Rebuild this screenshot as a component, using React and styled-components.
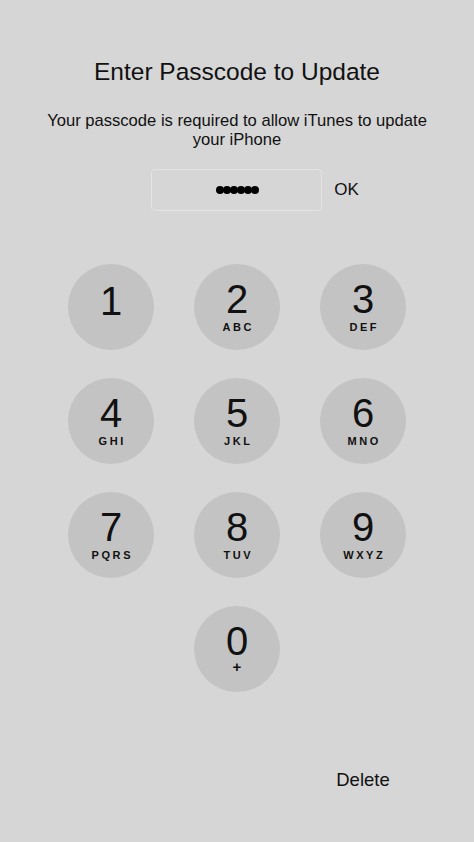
import React from 'react';
import styled, { createGlobalStyle } from 'styled-components';

const GlobalStyle = createGlobalStyle`
    html, body {
        margin: 0;
        padding: 0;
        background: #d6d6d6;
    }
    body {
        font-family: "Liberation Sans", Arial, sans-serif;
        color: #111;
    }
`;

const Screen = styled.div`
    width: 474px;
    height: 842px;
    background: #d6d6d6;
    display: flex;
    flex-direction: column;
    align-items: center;
    box-sizing: border-box;
    padding-top: 58px;
`;

const Title = styled.h1`
    margin: 0;
    font-size: 24.5px;
    line-height: 28px;
    font-weight: 400;
    color: #111;
`;

const Message = styled.p`
    margin: 25px 0 0;
    width: 392px;
    text-align: center;
    font-size: 16.6px;
    line-height: 19px;
    color: #111;
`;

const EntryRow = styled.div`
    display: flex;
    align-items: center;
    margin-top: 20px;
    margin-left: 36px;
    gap: 12px;
`;

const Field = styled.div`
    width: 169px;
    height: 40px;
    border: 1px solid #e4e4e4;
    border-radius: 4px;
    display: flex;
    align-items: center;
    justify-content: center;
`;

const Dots = styled.div`
    display: flex;
    margin-left: 2px;
`;

const Dot = styled.span`
    width: 8px;
    height: 8px;
    border-radius: 50%;
    background: #000;
    margin-left: -1px;
`;

const OkButton = styled.span`
    font-size: 17px;
    color: #111;
`;

const Keypad = styled.div`
    display: grid;
    grid-template-columns: repeat(3, 86px);
    column-gap: 40px;
    row-gap: 28px;
    margin-top: 53px;
`;

const Key = styled.div`
    width: 86px;
    height: 86px;
    border-radius: 50%;
    background: #c3c3c3;
    display: flex;
    flex-direction: column;
    align-items: center;
    justify-content: center;
    grid-column: ${p => p.$col || 'auto'};
`;

const Digit = styled.span`
    font-size: 40px;
    line-height: 36px;
    font-weight: 300;
    color: #111;
    margin-top: ${p => (p.$alone ? '-13px' : '-1px')};
`;

const Letters = styled.span`
    font-size: 11px;
    line-height: 12px;
    font-weight: 700;
    letter-spacing: 2.6px;
    margin-right: -2.6px;
    color: #111;
    margin-top: 4px;
`;

const Plus = styled.span`
    font-size: 15px;
    line-height: 15px;
    font-weight: 700;
    color: #111;
    margin-top: 0px;
`;

const Footer = styled.div`
    width: 338px;
    display: grid;
    grid-template-columns: repeat(3, 86px);
    column-gap: 40px;
    margin-top: 77px;
`;

const DeleteButton = styled.span`
    grid-column: 3;
    text-align: center;
    font-size: 18.5px;
    color: #111;
`;

const keys = [
    ['1', ''],
    ['2', 'ABC'],
    ['3', 'DEF'],
    ['4', 'GHI'],
    ['5', 'JKL'],
    ['6', 'MNO'],
    ['7', 'PQRS'],
    ['8', 'TUV'],
    ['9', 'WXYZ'],
];

export default function App() {
    return (
        <>
            <GlobalStyle />
            <Screen>
                <Title>Enter Passcode to Update</Title>
                <Message>Your passcode is required to allow iTunes to update your iPhone</Message>
                <EntryRow>
                    <Field>
                        <Dots>
                            {[0, 1, 2, 3, 4, 5].map(i => <Dot key={i} />)}
                        </Dots>
                    </Field>
                    <OkButton>OK</OkButton>
                </EntryRow>
                <Keypad>
                    {keys.map(([d, l]) => (
                        <Key key={d}>
                            <Digit $alone={!l}>{d}</Digit>
                            {l && <Letters>{l}</Letters>}
                        </Key>
                    ))}
                    <Key $col={2}>
                        <Digit>0</Digit>
                        <Plus>+</Plus>
                    </Key>
                </Keypad>
                <Footer>
                    <DeleteButton>Delete</DeleteButton>
                </Footer>
            </Screen>
        </>
    );
}
